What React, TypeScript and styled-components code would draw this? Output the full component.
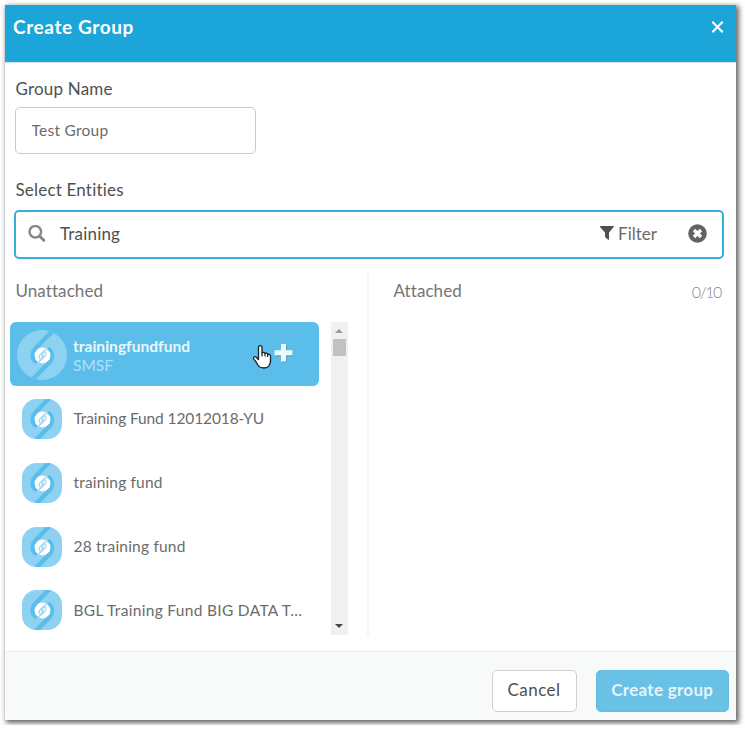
import React from 'react';
import styled, { createGlobalStyle, css } from 'styled-components';

const GlobalStyle = createGlobalStyle`
  * { box-sizing: border-box; }
  body {
    margin: 0;
    background: #fff;
    overflow: hidden;
    font-family: Lato, "Liberation Sans", sans-serif;
    color: #505050;
  }
  button, input { font: inherit; letter-spacing: inherit; margin: 0; }
`;

const Dialog = styled.section`
  display: flex;
  flex-direction: column;
  width: 731px;
  height: 715px;
  margin: 5px;
  background: #fff;
  box-shadow: 2px 2px 5px 1px rgba(0, 0, 0, 0.6);
`;

const Header = styled.header`
  display: flex;
  justify-content: space-between;
  height: 58px;
  padding: 11px 12px 0 8px;
  background: #1ba5d8;
  border-bottom: 1px solid #d3e6ed;
  color: #fff;
`;

const Title = styled.h1`
  margin: 0;
  font-size: 19px;
  line-height: 22px;
  font-weight: 700;
  letter-spacing: 0.6px;
`;

const CloseButton = styled.button`
  display: flex;
  width: 13px;
  height: 20px;
  padding: 5px 0 0;
  border: 0;
  background: none;
`;

const Body = styled.main`
  flex: 1;
  display: flex;
  flex-direction: column;
  padding: 15px 13px 0 11px;
`;

const Label = styled.label`
  margin-left: -0.5px;
  font-size: 17px;
  line-height: 22px;
  letter-spacing: 0.19px;
`;

const NameInput = styled.input`
  width: 241px;
  height: 47px;
  margin: 7px 0 25px -1px;
  padding: 0 15.5px 1px;
  border: 1px solid #c9c9c9;
  border-radius: 5px;
  color: #6b6b6b;
  font-size: 15.5px;
  letter-spacing: 0.25px;
  outline: 0;
`;

const SearchBox = styled.div`
  display: flex;
  align-items: center;
  flex: none;
  height: 49px;
  margin: 9px -1px 0 -2px;
  padding: 0 15px 2px 12px;
  border: 2px solid #35b0da;
  border-radius: 5px;
`;

const SearchInput = styled.input`
  flex: 1;
  min-width: 0;
  margin-left: 14px;
  padding: 0 0 1px;
  border: 0;
  outline: 0;
  color: #505050;
  font-size: 17px;
  letter-spacing: 0.18px;
`;

const FilterButton = styled.button`
  display: flex;
  align-items: center;
  gap: 4px;
  margin-right: 31px;
  padding: 0 0 1px;
  border: 0;
  background: none;
  color: #6b6b6b;
  font-size: 17px;
`;

const Columns = styled.div`
  display: flex;
  height: 365px;
  margin-top: 12px;
`;

const Column = styled.div<{ $attached?: boolean }>`
  width: ${p => (p.$attached ? 'auto' : '351px')};
  flex: ${p => (p.$attached ? 1 : 'none')};
  padding-top: 9px;
  ${p => p.$attached && css`
    border-left: 2px solid #f5f5f5;
    padding-left: 25px;
  `}
`;

const ColumnHeader = styled.div`
  display: flex;
  justify-content: space-between;
  margin: 0 1px 0 -0.5px;
  color: #747474;
  font-size: 17px;
  line-height: 22px;
  letter-spacing: 0.07px;
`;

const Count = styled.span`
  color: #888;
  font-size: 16px;
  font-weight: 300;
  letter-spacing: -1.4px;
  padding: 1px 1px 0 0;
`;

const ListArea = styled.div`
  display: flex;
  gap: 12px;
  margin: 20px 0 0 -6px;
`;

const List = styled.ul`
  width: 309px;
  height: 313px;
  margin: 0;
  padding: 0;
  overflow: hidden;
  list-style: none;
`;

const Row = styled.li<{ $selected?: boolean }>`
  display: flex;
  align-items: center;
  height: 64px;
  padding-left: ${p => (p.$selected ? 7 : 12)}px;
  border-radius: 6px;
  background: ${p => (p.$selected ? '#5bbeea' : 'transparent')};
  svg { flex: none; }
  & > svg { margin-top: 2px; }
  &:last-child > svg { margin-top: 0; }
`;

const RowText = styled.div<{ $selected?: boolean }>`
  flex: 1;
  margin-left: ${p => (p.$selected ? 6 : 11.5)}px;
  padding-top: ${p => (p.$selected ? 3 : 0)}px;
  color: ${p => (p.$selected ? '#fff' : '#6b6b6b')};
  font-size: 15.5px;
  line-height: 19px;
  white-space: nowrap;
`;

const Name = styled.div<{ $bold?: boolean; $spacing: number }>`
  font-weight: ${p => (p.$bold ? 700 : 400)};
  letter-spacing: ${p => p.$spacing}px;
  opacity: ${p => (p.$bold ? 0.88 : 1)};
`;

const Kind = styled.div`
  color: #b0def4;
`;

const RowActions = styled.div`
  display: flex;
  align-items: flex-start;
  width: 67px;
  height: 26px;
  margin-top: 5px;
`;

const Scrollbar = styled.div`
  display: flex;
  flex-direction: column;
  align-items: center;
  width: 17px;
  height: 313px;
  margin-left: -0.5px;
  background: #f0f0f0;
`;

const Arrow = styled.span<{ $down?: boolean }>`
  border: 4px solid transparent;
  ${p => p.$down
    ? css`border-bottom: 0; border-top-color: #444; margin: auto 0 7px;`
    : css`border-top: 0; border-bottom-color: #999; margin: 7px 0 6px;`}
`;

const Thumb = styled.div`
  width: 13px;
  height: 17px;
  background: #c1c1c1;
`;

const Footer = styled.footer`
  display: flex;
  justify-content: flex-end;
  gap: 19px;
  height: 69px;
  padding: 18px 7px 0;
  border-top: 1px solid #eceeed;
  background: #f8faf9;
`;

const Button = styled.button<{ $primary?: boolean }>`
  width: ${p => (p.$primary ? 133.5 : 85)}px;
  height: 42px;
  padding: 0 0 3px;
  border: 1px solid ${p => (p.$primary ? '#64bce3' : '#cfcfcf')};
  border-radius: 5px;
  background: ${p => (p.$primary ? '#69c1e5' : '#fff')};
  color: ${p => (p.$primary ? '#e3f4fb' : '#505050')};
  font-size: 17px;
  font-weight: ${p => (p.$primary ? 700 : 400)};
  letter-spacing: ${p => (p.$primary ? 0.3 : 0.45)}px;
  white-space: nowrap;
`;

function EntityLogo({ round, id }: { round?: boolean; id: string }) {
  const size = round ? 50 : 40;
  return (
    <svg width={size} height={size} viewBox={round ? '-5 -5 50 50' : '0 0 40 40'}>
      <clipPath id={id}>
        {round ? <circle cx="20" cy="20" r="25" /> : <rect width="40" height="40" rx="14.5" />}
      </clipPath>
      <g clipPath={`url(#${id})`}>
        <rect x="-5" y="-5" width="50" height="50" fill="#8dd2f1" />
        <g fill="none" stroke="#5bbeea" strokeWidth="4.500" strokeLinecap="round">
          <path d="M34.500 -8L13.800 13C9.500 17.500 10 23.500 13.300 26.300" />
          <path d="M6.100 49L26.800 28C31.100 23.500 30.600 17.500 27.300 14.700" />
        </g>
        <circle cx="20.500" cy="20.500" r="7.900" fill="#fff" />
        <g fill="none" stroke="#8fd3f1" strokeWidth="1.100" strokeLinecap="round">
          <path d="M25 13.500L18.300 19.300C16.300 21.300 16.700 24 18.300 24C20 24 21.300 21.600 21.300 19.500" />
          <path d="M16 27.500L22.700 21.700C24.700 19.700 24.300 17 22.700 17C21 17 19.700 19.400 19.700 21.500" />
        </g>
      </g>
    </svg>
  );
}

const SearchIcon = () => (
  <svg width="18" height="18" viewBox="0 0 18 18" fill="none" stroke="#888">
    <circle cx="7.300" cy="6.800" r="5.800" strokeWidth="2.500" />
    <path d="M11.500 11L15.800 15.300" strokeWidth="3" strokeLinecap="round" />
  </svg>
);

const FilterIcon = () => (
  <svg width="14" height="14" viewBox="0 0 14 14">
    <path d="M.5 0h13q.7.500 0 1.300L9 6.500V13.500q-.5.700-1.200 0L5 11V6.500L.2 1.300Q-.2.400.5 0z" fill="#505050" />
  </svg>
);

const ClearIcon = () => (
  <svg width="19" height="19" viewBox="0 0 19 19">
    <circle cx="9.500" cy="9.500" r="9.300" fill="#626262" />
    <path d="M6 6l7 7M13 6l-7 7" stroke="#fff" strokeWidth="3.300" />
  </svg>
);

const HandPointer = () => (
  <svg width="20" height="26" viewBox="0 0 20 26">
    <path
      d="M6.500 15.500V3.500c0-2.600 3.500-2.600 3.500 0V9c.7-1 2.800-.8 3 .5 1-.8 2.600-.3 2.700 1 1.200-.6 2.800.1 2.800 1.500v5.500c0 2-1.200 3.300-1.700 4.500-1 1.500-2.500 2-4.800 2-2.800 0-4.600-.7-5.800-2.500l-2.500-4.200-2-2.500c-.8-1.500.8-2.800 2.300-1.800z"
      fill="#fff" stroke="#15202b" strokeWidth="1.300" strokeLinejoin="round"
    />
    <path d="M10 8.500v4M13 9.500v3M15.700 10.500v2.500" stroke="#15202b" strokeWidth="1.200" />
  </svg>
);

const PlusIcon = () => (
  <svg width="22" height="22" viewBox="-2 1.500 22 22">
    <path d="M8 3h5v6h6v5h-6v6H8v-6H2V9h6z" fill="#358fb7" opacity=".5" />
    <path d="M7 1.500h5v6.300h6.500v5H12V19H7v-6.200H.5v-5H7z" fill="#eef8fd" />
  </svg>
);

const entities = [
  { name: 'Training Fund 12012018-YU', spacing: -0.11 },
  { name: 'training fund', spacing: 0.16 },
  { name: '28 training fund', spacing: 0.2 },
  { name: 'BGL Training Fund BIG DATA T...', spacing: 0.31 },
];

export default function App() {
  return (
    <>
      <GlobalStyle />
      <Dialog>
        <Header>
          <Title>Create Group</Title>
          <CloseButton aria-label="Close">
            <svg width="13" height="12" viewBox="0 0 13 12">
              <path d="M1.300.800l10.400 10.400M11.700.800L1.300 11.200" stroke="#fff" strokeWidth="2.100" />
            </svg>
          </CloseButton>
        </Header>
        <Body>
          <Label htmlFor="group-name">Group Name</Label>
          <NameInput id="group-name" defaultValue="Test Group" />
          <Label htmlFor="entity-search">Select Entities</Label>
          <SearchBox>
            <SearchIcon />
            <SearchInput id="entity-search" defaultValue="Training" />
            <FilterButton><FilterIcon />Filter</FilterButton>
            <ClearIcon />
          </SearchBox>
          <Columns>
            <Column>
              <ColumnHeader>Unattached</ColumnHeader>
              <ListArea>
                <List>
                  <Row $selected>
                    <EntityLogo round id="logo-selected" />
                    <RowText $selected>
                      <Name $bold $spacing={0.03}>trainingfundfund</Name>
                      <Kind>SMSF</Kind>
                    </RowText>
                    <RowActions><HandPointer /><PlusIcon /></RowActions>
                  </Row>
                  {entities.map((entity, i) => (
                    <Row key={entity.name}>
                      <EntityLogo id={`logo-${i}`} />
                      <RowText><Name $spacing={entity.spacing}>{entity.name}</Name></RowText>
                    </Row>
                  ))}
                </List>
                <Scrollbar><Arrow /><Thumb /><Arrow $down /></Scrollbar>
              </ListArea>
            </Column>
            <Column $attached>
              <ColumnHeader>Attached<Count>0/10</Count></ColumnHeader>
            </Column>
          </Columns>
        </Body>
        <Footer>
          <Button>Cancel</Button>
          <Button $primary>Create group</Button>
        </Footer>
      </Dialog>
    </>
  );
}
